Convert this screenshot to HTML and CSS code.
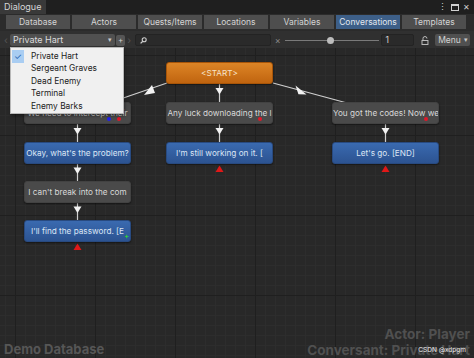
FILE: index.html
```html
<!DOCTYPE html>
<html>
<head>
    <meta charset="utf-8">
    <title>Dialogue</title>
    <link rel="stylesheet" href="styles.css">
</head>
<body>
    <div class="titlebar">
        <div class="title-tab">Dialogue</div>
        <div class="win-icons">
            <span class="kebab">&#8942;</span>
            <span class="maxbox"></span>
            <span class="closex">&#10005;</span>
        </div>
    </div>

    <div class="tabs">
        <div class="tab">Database</div>
        <div class="tab">Actors</div>
        <div class="tab">Quests/Items</div>
        <div class="tab">Locations</div>
        <div class="tab">Variables</div>
        <div class="tab active">Conversations</div>
        <div class="tab">Templates</div>
    </div>

    <div class="toolbar">
        <span class="nav">&#8249;</span>
        <div class="select">Private Hart <span class="caret">&#9662;</span></div>
        <div class="plus">+</div>
        <span class="nav">&#8250;</span>
        <div class="search">
            <svg width="7" height="7" viewBox="0 0 7 7"><circle cx="4.2" cy="2.8" r="2" fill="none" stroke="#cfcfcf" stroke-width="1.1"/><line x1="2.8" y1="4.2" x2="0.6" y2="6.4" stroke="#cfcfcf" stroke-width="1.3"/></svg>
        </div>
        <span class="clear">&#215;</span>
        <div class="slider"><span class="knob"></span></div>
        <div class="numfield">1</div>
        <svg class="lock" width="8" height="9" viewBox="0 0 8 9"><path d="M2 4 V2.5 A2 2 0 0 1 6 2.5" fill="none" stroke="#bdbdbd" stroke-width="1"/><rect x="1" y="4.5" width="6" height="4" fill="none" stroke="#bdbdbd" stroke-width="1"/></svg>
        <div class="menu">Menu <span class="caret">&#9662;</span></div>
    </div>

    <div class="canvas">
        <svg class="wires" width="474" height="310" viewBox="0 0 474 310">
            <g stroke="#cfcfcf" stroke-width="1.2" fill="none">
                <line x1="167" y1="35" x2="100" y2="58"/>
                <line x1="273" y1="35" x2="347" y2="55"/>
                <line x1="219.5" y1="36" x2="219.5" y2="54"/>
                <line x1="219.5" y1="76" x2="219.5" y2="94"/>
                <line x1="77.5" y1="76" x2="77.5" y2="94"/>
                <line x1="77.5" y1="116" x2="77.5" y2="133"/>
                <line x1="77.5" y1="155" x2="77.5" y2="172"/>
                <line x1="385.5" y1="76" x2="385.5" y2="94"/>
            </g>
            <g fill="#f2f2f2">
                <polygon points="215.5,40 223.5,40 219.5,46.5"/>
                <polygon points="215.5,80 223.5,80 219.5,86.5"/>
                <polygon points="73.5,80 81.5,80 77.5,86.5"/>
                <polygon points="73.5,119.5 81.5,119.5 77.5,126"/>
                <polygon points="73.5,158.5 81.5,158.5 77.5,165"/>
                <polygon points="381.5,80 389.5,80 385.5,86.5"/>
                <polygon points="144,47 152,37 155,45"/>
                <polygon points="296,37 306,47 298,46" transform="rotate(-6 301 42)"/>
            </g>
            <g fill="#e01818">
                <polygon points="215.5,124 223.5,124 219.5,117.5"/>
                <polygon points="381.5,124 389.5,124 385.5,117.5"/>
                <polygon points="73.5,202 81.5,202 77.5,195.5"/>
            </g>
        </svg>

        <div class="node start n-start">&lt;START&gt;</div>
        <div class="node gray n-a1">We need to intercept their<span class="dot blue d1"></span><span class="dot red d2"></span></div>
        <div class="node gray n-b1">Any luck downloading the l<span class="dot red d3"></span></div>
        <div class="node gray n-c1">You got the codes! Now we<span class="dot red d3"></span></div>
        <div class="node blue n-a2">Okay, what's the problem?</div>
        <div class="node blue n-b2">I'm still working on it. [</div>
        <div class="node blue n-c2">Let's go. [END]</div>
        <div class="node gray n-a3">I can't break into the com</div>
        <div class="node blue n-a4">I'll find the password. [E<span class="plusdot">+</span></div>

        <div class="db-name">Demo Database</div>
        <div class="who">
            <div>Actor: Player</div>
            <div>Conversant: Private Hart</div>
        </div>
        <div class="mark">CSDN @xdpgm</div>

        <ul class="popup">
            <li class="checked"><span class="tick">&#10003;</span>Private Hart</li>
            <li>Sergeant Graves</li>
            <li>Dead Enemy</li>
            <li>Terminal</li>
            <li>Enemy Barks</li>
        </ul>
    </div>
</body>
</html>
```

FILE: styles.css
```css
* {box-sizing: border-box;}
body {
    margin: 0;
    width: 474px;
    height: 358px;
    overflow: hidden;
    background-color: #282828;
    color: #d2d2d2;
    font-family: Inter, "Noto Sans", sans-serif;
    font-size: 8.5px;}

/* title bar */
.titlebar {
    height: 14px;
    display: flex;
    justify-content: space-between;
    background-color: #1f1f1f;}
.title-tab {
    width: 46px;
    padding: 1px 0 0 4px;
    background-color: #393939;
    color: #d6d6d6;
    font-size: 9px;
    line-height: 12px;}
.win-icons {
    display: flex;
    align-items: center;
    gap: 4px;
    padding-right: 4px;
    color: #d0d0d0;}
.kebab {font-size: 9px; line-height: 10px;}
.maxbox {width: 8px; height: 7px; border: 1px solid #d0d0d0; border-top-width: 2px;}
.closex {font-size: 8px;}

/* tabs */
.tabs {
    height: 17px;
    display: flex;
    gap: 2px;
    padding: 1px 6px 0;
    background-color: #2b2b2b;}
.tab {
    width: 64px;
    height: 14px;
    line-height: 14px;
    text-align: center;
    background-color: #4e4e4e;
    color: #d4d4d4;}
.tab.active {background-color: #3d5f88; color: #e2e8f0;}

/* toolbar */
.toolbar {
    height: 17px;
    display: flex;
    align-items: center;
    padding: 1px 4px 0 2px;
    background-color: #303030;}
.nav {color: #555; width: 8px; text-align: center; font-size: 10px;}
.select {
    width: 106px;
    height: 12px;
    line-height: 12px;
    padding: 0 3px;
    display: flex;
    justify-content: space-between;
    background-color: #505050;
    border-radius: 2px;
    color: #dcdcdc;
    font-size: 9px;}
.caret {font-size: 7px; color: #c8c8c8;}
.plus {
    width: 9px;
    height: 11px;
    margin-left: 1px;
    line-height: 11px;
    text-align: center;
    background-color: #555;
    border-radius: 2px;
    font-size: 8px;}
.search {
    width: 137px;
    height: 12px;
    margin-left: 2px;
    padding: 2px 0 0 4px;
    background-color: #2a2a2a;
    border: 1px solid #232323;
    border-radius: 2px;}
.search svg {display: block;}
.clear {width: 13px; text-align: center; color: #888; font-size: 9px;}
.slider {
    position: relative;
    width: 95px;
    height: 1px;
    margin: 0 2px 0 1px;
    background-color: #7a7a7a;}
.knob {
    position: absolute;
    left: 42px;
    top: -3px;
    width: 7px;
    height: 7px;
    border-radius: 50%;
    background-color: #bdbdbd;}
.numfield {
    width: 33px;
    height: 12px;
    line-height: 11px;
    padding-left: 3px;
    background-color: #2a2a2a;
    border: 1px solid #232323;
    border-radius: 2px;}
.lock {margin: 0 6px 0 7px;}
.menu {
    width: 35px;
    height: 12px;
    line-height: 12px;
    padding: 0 2px 0 3px;
    display: flex;
    justify-content: space-between;
    background-color: #505050;
    border-radius: 2px;
    font-size: 8.5px;}

/* graph canvas */
.canvas {
    position: relative;
    height: 310px;
    background-color: #282828;
    background-image:
        linear-gradient(90deg, #1f1f1f 1px, transparent 1px),
        linear-gradient(#1f1f1f 1px, transparent 1px),
        linear-gradient(90deg, #2d2d2d 1px, transparent 1px),
        linear-gradient(#2d2d2d 1px, transparent 1px);
    background-size: 80px 80px, 80px 80px, 10px 10px, 10px 10px;
    background-position: 15px 7px, 15px 7px, 5px 7px, 5px 7px;}
.wires {position: absolute; left: 0; top: 0;}

.node {
    position: absolute;
    width: 107px;
    height: 22px;
    line-height: 21px;
    text-align: center;
    white-space: nowrap;
    overflow: hidden;
    border-radius: 3px;
    font-size: 8.2px;
    box-shadow: 0 1px 2px rgba(0,0,0,0.5);}
.node.gray {background-color: #4a4a4a; border: 1px solid #424242; color: #d8d8d8;}
.node.blue {
    background: linear-gradient(#3a6ab0, #2c5391);
    border: 1px solid #284a80;
    color: #dde6f4;}
.node.start {
    background: linear-gradient(#dd8526, #c0640f);
    border: 1px solid #a85508;
    color: #f7e4cc;}

.n-start {left: 166px; top: 14px;}
.n-a1 {left: 24px; top: 54px;}
.n-b1 {left: 166px; top: 54px;}
.n-c1 {left: 332px; top: 54px;}
.n-a2 {left: 24px; top: 94px;}
.n-b2 {left: 166px; top: 94px;}
.n-c2 {left: 332px; top: 94px;}
.n-a3 {left: 24px; top: 133px;}
.n-a4 {left: 24px; top: 172px;}

.dot {position: absolute; top: 14px; width: 4px; height: 4px; border-radius: 50%;}
.dot.blue {background-color: #2222ee;}
.dot.red {background-color: #e0182a;}
.d1 {left: 82px;}
.d2 {left: 92px;}
.d3 {left: 91px;}
.plusdot {
    position: absolute;
    right: 1px;
    bottom: 1px;
    line-height: 7px;
    font-size: 7px;
    font-weight: bold;
    color: #2fcf3a;}

.db-name {
    position: absolute;
    left: 4px;
    bottom: 1px;
    font-size: 13px;
    font-weight: bold;
    color: #565656;}
.who {
    position: absolute;
    right: 4px;
    bottom: 0;
    text-align: right;
    font-size: 13.5px;
    font-weight: bold;
    line-height: 16px;
    color: #505050;}
.mark {
    position: absolute;
    right: 8px;
    bottom: 4px;
    font-size: 6.5px;
    color: #e8e8e8;}

/* actor dropdown list */
.popup {
    position: absolute;
    left: 10px;
    top: -1px;
    width: 114px;
    margin: 0;
    padding: 2px 0 1px;
    list-style: none;
    background-color: #f0f0f0;
    border: 1px solid #b8b8b8;
    box-shadow: 1px 2px 3px rgba(0,0,0,0.4);
    color: #1b1b1b;
    font-size: 8.4px;}
.popup li {height: 12.4px; line-height: 12.4px; padding-left: 20px; position: relative;}
.tick {
    position: absolute;
    left: 1px;
    top: 0;
    width: 12px;
    height: 13px;
    line-height: 13px;
    text-align: center;
    background-color: #a9cdf2;
    color: #1f5fb0;
    font-size: 9px;}
```
